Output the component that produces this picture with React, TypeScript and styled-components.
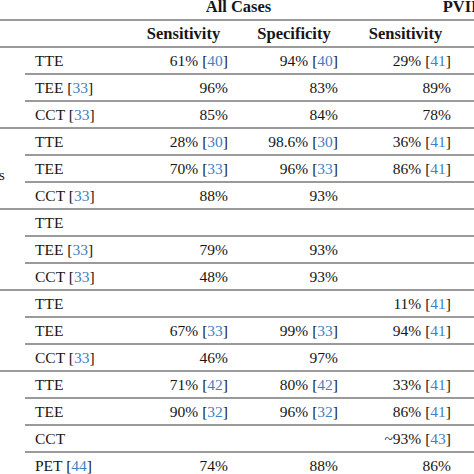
import React from "react";
import styled, { createGlobalStyle } from "styled-components";

const GlobalStyle = createGlobalStyle`
  html, body {
    margin: 0;
    padding: 0;
    background: #ffffff;
    overflow: hidden;
  }
  body {
    font-family: "Liberation Serif", "Times New Roman", serif;
    color: #161616;
  }
`;

const Page = styled.div`
  width: 474px;
  height: 474px;
  overflow: hidden;
`;

const Grid = styled.div`
  display: grid;
  grid-template-columns: 85px 103px 111px 110px 113px 114px;
  grid-auto-rows: 27px;
  margin: -8px 0 0 -60px;
  width: 636px;
`;

const Cell = styled.div<{ $rule?: boolean; $align?: "left" | "right" | "center" }>`
  box-sizing: border-box;
  display: flex;
  align-items: center;
  justify-content: ${(p) =>
    p.$align === "right" ? "flex-end" : p.$align === "center" ? "center" : "flex-start"};
  padding: 0 11px 0 10px;
  border-top: 2px solid ${(p) => (p.$rule ? "#9a9a9a" : "transparent")};
  font-size: 15.5px;
  white-space: nowrap;
`;

const HeadCell = styled(Cell)<{ $cols?: number }>`
  grid-column: span ${(p) => p.$cols || 1};
  font-weight: 700;
  font-size: 16.5px;
  padding: 0;
`;

const GroupLabel = styled(Cell)<{ $rows: number; $shift?: number }>`
  grid-row: span ${(p) => p.$rows};
  padding: ${(p) => p.$shift || 0}px 0 0 14px;
`;

const Cite = styled.span`
  color: #3f7fc2;
`;

const withCite = (text: string) => {
  const m = text.match(/^(.*)\[(\d+)\]$/);
  if (!m) return text;
  return (
    <>
      {m[1]}[<Cite>{m[2]}</Cite>]
    </>
  );
};

type Row = [string, string, string, string, string];

const groups: { label: string; shift?: number; rows: Row[] }[] = [
  {
    label: "",
    rows: [
      ["TTE", "61% [40]", "94% [40]", "29% [41]", ""],
      ["TEE [33]", "96%", "83%", "89%", ""],
      ["CCT [33]", "85%", "84%", "78%", ""],
    ],
  },
  {
    label: "Abscess",
    shift: 13,
    rows: [
      ["TTE", "28% [30]", "98.6% [30]", "36% [41]", ""],
      ["TEE", "70% [33]", "96% [33]", "86% [41]", ""],
      ["CCT [33]", "88%", "93%", "", ""],
    ],
  },
  {
    label: "",
    rows: [
      ["TTE", "", "", "", ""],
      ["TEE [33]", "79%", "93%", "", ""],
      ["CCT [33]", "48%", "93%", "", ""],
    ],
  },
  {
    label: "",
    rows: [
      ["TTE", "", "", "11% [41]", ""],
      ["TEE", "67% [33]", "99% [33]", "94% [41]", ""],
      ["CCT [33]", "46%", "97%", "", ""],
    ],
  },
  {
    label: "",
    rows: [
      ["TTE", "71% [42]", "80% [42]", "33% [41]", ""],
      ["TEE", "90% [32]", "96% [32]", "86% [41]", ""],
      ["CCT", "", "", "~93% [43]", ""],
      ["PET [44]", "74%", "88%", "86%", ""],
    ],
  },
];

export default function App() {
  return (
    <Page>
      <GlobalStyle />
      <Grid>
        <HeadCell />
        <HeadCell />
        <HeadCell $cols={2} $align="center">
          All Cases
        </HeadCell>
        <HeadCell $cols={2} $align="center">
          PVIE
        </HeadCell>

        <HeadCell $rule />
        <HeadCell $rule />
        <HeadCell $rule $align="center">
          Sensitivity
        </HeadCell>
        <HeadCell $rule $align="center">
          Specificity
        </HeadCell>
        <HeadCell $rule $align="center">
          Sensitivity
        </HeadCell>
        <HeadCell $rule $align="center">
          Specificity
        </HeadCell>

        {groups.map((group, gi) =>
          group.rows.map((row, ri) => (
            <React.Fragment key={`${gi}-${ri}`}>
              {ri === 0 && (
                <GroupLabel $rule $rows={group.rows.length} $shift={group.shift}>
                  {group.label}
                </GroupLabel>
              )}
              <Cell $rule>{withCite(row[0])}</Cell>
              {row.slice(1).map((v, ci) => (
                <Cell key={ci} $rule $align="right">
                  {withCite(v)}
                </Cell>
              ))}
            </React.Fragment>
          ))
        )}
      </Grid>
    </Page>
  );
}
